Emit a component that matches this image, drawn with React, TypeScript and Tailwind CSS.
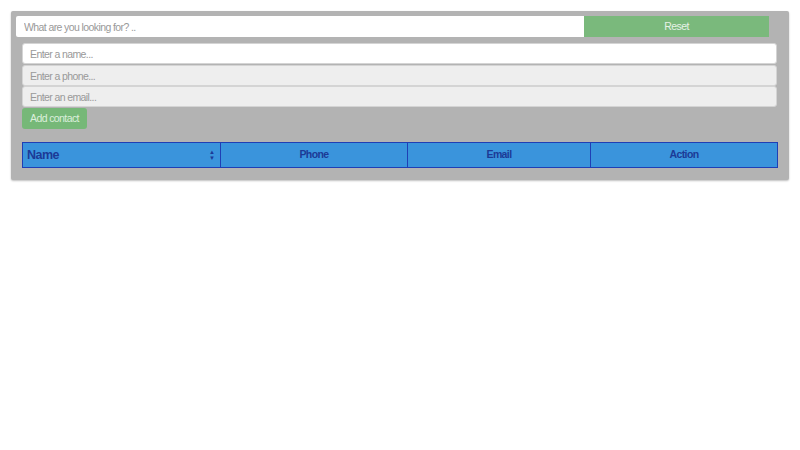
import React, { useState } from "react";

const cols = ["Phone", "Email", "Action"];

const font = "font-['Liberation_Sans',Arial,sans-serif]";
const small = "text-[10.5px] tracking-[-0.6px]";

export default function App() {
  const [search, setSearch] = useState("");

  return (
    <div className={"min-h-[450px] bg-white pt-[11px] px-[11px] " + font}>
      <div className="bg-[#b3b3b3] rounded-[2px] shadow-[0_1px_2px_rgba(0,0,0,0.25)] pt-[5px] pl-[5px] pr-[20px] pb-[12px]">
        {/* search bar */}
        <div className="flex h-[21px]">
          <input
            value={search}
            onChange={(e) => setSearch(e.target.value)}
            placeholder="What are you looking for? .."
            className={`w-[568px] h-full bg-white rounded-l-[2px] px-[8px] text-[#555] placeholder:text-[#999] outline-none ${font} ${small}`}
          />
          <button className={`w-[185px] h-full bg-[#7ab97c] text-[#e6f2e6] ${small}`}>Reset</button>
        </div>

        {/* add form */}
        <div className="mt-[6px] ml-[6px] mr-[-8px] flex flex-col">
          <input
            placeholder="Enter a name..."
            className={`h-[21px] bg-white border border-[#d4d4d4] rounded-[3px] px-[7px] placeholder:text-[#999] outline-none ${font} ${small}`}
          />
          <input
            placeholder="Enter a phone..."
            className={`mt-[1px] h-[21px] bg-[#eeeeee] border border-[#d4d4d4] rounded-[3px] px-[7px] placeholder:text-[#999] outline-none ${font} ${small}`}
          />
          <input
            placeholder="Enter an email..."
            className={`h-[21px] bg-[#eeeeee] border border-[#d4d4d4] rounded-[3px] px-[7px] placeholder:text-[#999] outline-none ${font} ${small}`}
          />
          <div className="flex mt-[1px]">
            <button className={`h-[21px] px-[8px] bg-[#76b878] rounded-[3px] text-[#dcefdc] ${small}`}>
              Add contact
            </button>
          </div>
        </div>

        {/* table */}
        <table className="mt-[13px] ml-[6px] w-[756px] border-collapse border border-[#1f3fb5] bg-[#3a94dc] text-[#1c3a96]">
          <thead>
            <tr className="h-[25px]">
              <th className="w-[198px] border border-[#1f3fb5] px-[4px] text-left text-[12.5px] tracking-[-0.5px] font-bold">
                <div className="flex items-center justify-between">
                  <span>Name</span>
                  <span className="flex flex-col text-[6px] leading-[6px] mr-[1px] tracking-normal">
                    <span>▲</span>
                    <span>▼</span>
                  </span>
                </div>
              </th>
              {cols.map((c, i) => (
                <th
                  key={c}
                  className={
                    "border border-[#1f3fb5] text-center text-[10.5px] tracking-[-0.6px] font-bold " +
                    (i === 0 ? "w-[187px]" : i === 1 ? "w-[183px]" : "")
                  }
                >
                  {c}
                </th>
              ))}
            </tr>
          </thead>
        </table>
      </div>
    </div>
  );
}
